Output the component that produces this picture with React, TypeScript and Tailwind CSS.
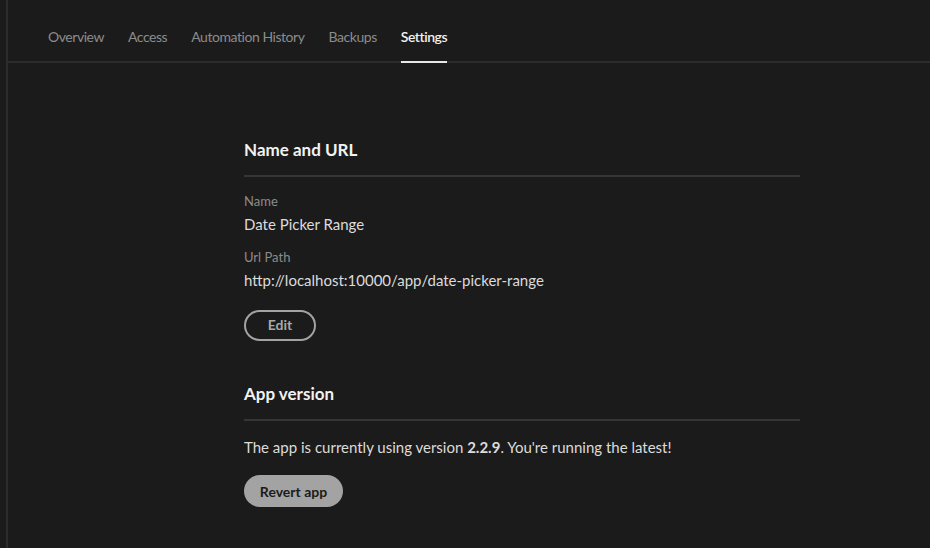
const tabs = ["Overview", "Access", "Automation History", "Backups", "Settings"];

export default function App() {
  return (
    <div
      className="flex h-[548px] w-full overflow-hidden bg-[#1b1b1b] text-[#dcdcdc]"
      style={{ fontFamily: "Lato, 'Open Sans', sans-serif" }}
    >
      <div className="w-[6px] shrink-0" />
      <div className="w-[2px] shrink-0 bg-[#2c2c2c]" />
      <div className="flex min-w-0 flex-1 flex-col">
        <nav className="flex h-[63px] gap-6 border-b-2 border-[#2c2c2c] pl-10">
          {tabs.map((tab) => {
            const active = tab === "Settings";
            return (
              <div
                key={tab}
                className={
                  active
                    ? "-mb-[2px] flex h-[63px] items-center border-b-2 border-[#e8e8e8] pt-[12px] text-[14px] font-semibold tracking-[-0.45px] text-[#f2f2f2]"
                    : "-mb-[2px] flex h-[63px] items-center border-b-2 border-transparent pt-[12px] text-[14px] tracking-[-0.45px] text-[#8c8c8c]"
                }
              >
                {tab}
              </div>
            );
          })}
        </nav>

        <div className="ml-[236px] w-[556px] pt-[75px]">
          <section>
            <h2 className="mb-[13px] text-[17px] font-bold leading-[24px] text-[#f2f2f2]">Name and URL</h2>
            <div className="h-[2px] bg-[#353535]" />
            <div className="mt-[15px] text-[13px] leading-[18px] text-[#8c8c8c]">Name</div>
            <div className="mt-[4px] text-[15px] leading-[20px] text-[#dcdcdc]">Date Picker Range</div>
            <div className="mt-[14px] text-[13px] leading-[18px] text-[#8c8c8c]">Url Path</div>
            <div className="mt-[4px] text-[15px] leading-[20px] text-[#dcdcdc]">http://localhost:10000/app/date-picker-range</div>
            <button className="mt-[20px] flex h-[31px] w-[72px] items-center justify-center rounded-full border-2 border-[#a3a3a3] pb-[2px] text-[14px] font-bold text-[#a8a8a8]">
              Edit
            </button>
          </section>

          <section className="mt-[41px]">
            <h2 className="mb-[13px] text-[17px] font-bold leading-[24px] text-[#f2f2f2]">App version</h2>
            <div className="h-[2px] bg-[#353535]" />
            <p className="mt-[16px] text-[15px] leading-[20px] text-[#dcdcdc]">
              The app is currently using version <span className="font-bold">2.2.9</span>. You're running the latest!
            </p>
            <button className="mt-[18px] flex h-[32px] w-[99px] items-center justify-center rounded-full bg-[#a3a3a3] text-[14px] font-bold text-[#1b1b1b]">
              Revert app
            </button>
          </section>
        </div>
      </div>
    </div>
  );
}
